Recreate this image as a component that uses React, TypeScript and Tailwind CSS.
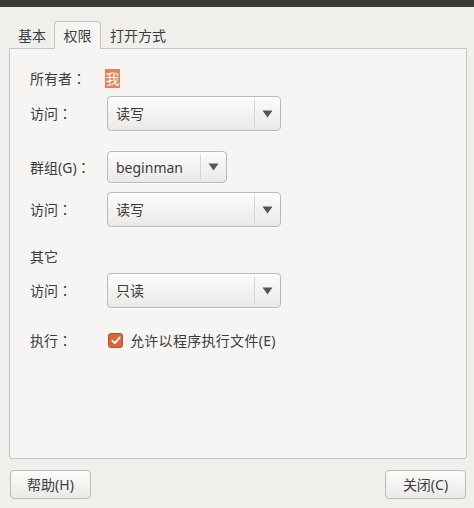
import React from "react";

const font = { fontFamily: '"Noto Sans", "Noto Sans CJK SC", sans-serif' };

function Arrow() {
  return (
    <svg width="11" height="8" viewBox="0 0 11 8">
      <path d="M0.5 0.5 L10.5 0.5 L5.5 7.5 Z" fill="#555555" />
    </svg>
  );
}

function Colon() {
  return <span style={{ fontFamily: '"Noto Sans CJK TC", sans-serif' }}>：</span>;
}

function Combo({ text, wide }: { text: string; wide: boolean }) {
  return (
    <div
      className={
        "flex items-stretch rounded-[4px] border border-[#bcbab6] bg-gradient-to-b from-[#fcfcfb] to-[#ebe9e6] shadow-[0_1px_0_rgba(255,255,255,0.8)] " +
        (wide ? "w-[174px] h-[35px]" : "w-[120px] h-[32px]")
      }
    >
      <div className="flex-1 flex items-center pl-[8px] text-[14px] text-[#3c3c3c]">{text}</div>
      <div className="my-[3px] w-px bg-[#d6d4d0]" />
      <div className="w-[25px] flex items-center justify-center">
        <Arrow />
      </div>
    </div>
  );
}

function Label({ children }: { children: React.ReactNode }) {
  return <div className="w-[77px] text-[14px] text-[#3c3c3c] whitespace-nowrap">{children}</div>;
}

export default function App() {
  return (
    <div className="w-[474px] h-[508px] bg-[#f0efec] flex flex-col" style={font}>
      <div className="h-[7px] bg-[#3c3b37]" />
      {/* tabs */}
      <div className="flex items-end h-[41px] pl-[10px]">
        <div className="w-[44px] h-[26px] flex items-center justify-center text-[14px] text-[#3c3c3c]">基本</div>
        <div className="w-[47px] h-[28px] -mb-px relative z-10 rounded-t-[4px] border border-b-0 border-[#c6c4c0] bg-[#f6f5f4] flex items-center justify-center text-[14px] text-[#3c3c3c]">
          权限
        </div>
        <div className="w-[74px] h-[26px] flex items-center justify-center text-[14px] text-[#3c3c3c]">打开方式</div>
      </div>
      {/* frame */}
      <div className="mx-[9px] w-[458px] h-[411px] border border-[#c6c4c0] rounded-b-[3px] bg-[#f6f5f4] pl-[20px] pt-[19px] flex flex-col">
        <div className="flex items-center h-[20px]">
          <Label>所有者<Colon /></Label>
          <span className="ml-[-2px] w-[15px] h-[19px] flex items-center justify-center bg-[#e8825a] text-white text-[14px]">我</span>
        </div>
        <div className="flex items-center mt-[8px]">
          <Label>访问<Colon /></Label>
          <Combo text="读写" wide />
        </div>
        <div className="flex items-center mt-[20px]">
          <Label>群组(G)<Colon /></Label>
          <Combo text="beginman" wide={false} />
        </div>
        <div className="flex items-center mt-[9px]">
          <Label>访问<Colon /></Label>
          <Combo text="读写" wide />
        </div>
        <div className="flex items-center h-[20px] mt-[19px]">
          <Label>其它</Label>
        </div>
        <div className="flex items-center mt-[7px]">
          <Label>访问<Colon /></Label>
          <Combo text="只读" wide />
        </div>
        <div className="flex items-center h-[20px] mt-[22px]">
          <Label>执行<Colon /></Label>
          <div className="ml-[1px] w-[15px] h-[15px] rounded-[3px] bg-[#d8663b] border border-[#b9532c] flex items-center justify-center">
            <svg width="10" height="9" viewBox="0 0 10 9">
              <path d="M1.2 4.6 L3.8 7.2 L8.8 1.4" stroke="white" strokeWidth="1.8" fill="none" strokeLinecap="round" strokeLinejoin="round" />
            </svg>
          </div>
          <span className="ml-[7px] text-[14px] text-[#3c3c3c] tracking-[0.3px]">允许以程序执行文件(E)</span>
        </div>
      </div>
      {/* footer */}
      <div className="flex justify-between pl-[10px] pr-[8px] mt-[11px]">
        <div className="w-[81px] h-[29px] rounded-[4px] border border-[#bcbab6] bg-gradient-to-b from-[#fcfcfb] to-[#ebe9e6] flex items-center justify-center text-[14px] text-[#3c3c3c]">
          帮助(H)
        </div>
        <div className="w-[81px] h-[29px] rounded-[4px] border border-[#bcbab6] bg-gradient-to-b from-[#fcfcfb] to-[#ebe9e6] flex items-center justify-center text-[14px] text-[#3c3c3c]">
          关闭(C)
        </div>
      </div>
    </div>
  );
}
